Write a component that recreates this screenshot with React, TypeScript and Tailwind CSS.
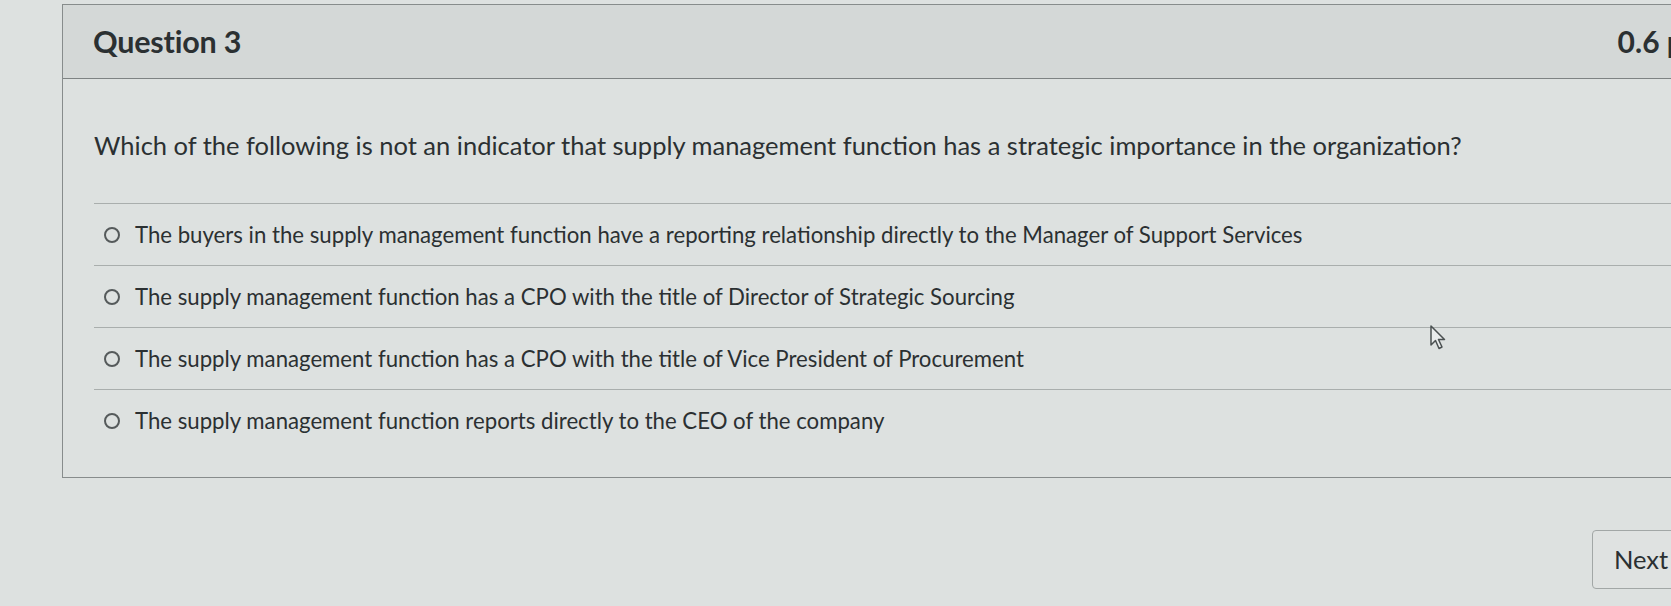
const options = [
  "The buyers in the supply management function have a reporting relationship directly to the Manager of Support Services",
  "The supply management function has a CPO with the title of Director of Strategic Sourcing",
  "The supply management function has a CPO with the title of Vice President of Procurement",
  "The supply management function reports directly to the CEO of the company",
];

export default function App() {
  return (
    <div className="relative h-[606px] w-full overflow-hidden bg-[#dde1e0] font-['Lato','Liberation_Sans',sans-serif] text-[#2b3032]">
      <div className="w-[1760px] pl-[62px] pt-[4px]">
        {/* question card */}
        <div className="border-[1.5px] border-[#878c8c]">
          <div className="flex h-[74px] items-center justify-between border-b-[1.5px] border-[#7e8383] bg-[#d4d8d7] pl-[30px] pr-[51px]">
            <h2 className="text-[30.5px] font-bold tracking-[-0.2px]">Question 3</h2>
            <span className="text-[30px] font-bold">0.6 pts</span>
          </div>

          <div className="pl-[31px] pt-[51px] pb-[25px]">
            <p className="text-[25.5px] leading-[30px]">
              Which of the following is not an indicator that supply management function has a strategic importance in the organization?
            </p>

            <div className="mt-[43px] border-t border-[#a9aead]">
              {options.map((o, i) => (
                <label
                  key={i}
                  className={
                    "flex h-[62px] items-center pl-[10px] text-[22.2px] " +
                    (i < options.length - 1 ? "border-b border-[#a9aead]" : "")
                  }
                >
                  <span className="h-[16px] w-[16px] shrink-0 rounded-full border-2 border-[#555a5b]"></span>
                  <span className="ml-[15px]">{o}</span>
                </label>
              ))}
            </div>
          </div>
        </div>

        <div className="flex justify-end pr-[48px] pt-[52px]">
          <button className="h-[59px] w-[120px] rounded-[4px] border-[1.5px] border-[#a2a7a6] bg-[#dfe2e1] pl-[21px] text-left text-[25.5px] text-[#2b3032]">
            Next
          </button>
        </div>
      </div>

      {/* mouse pointer caught in the photo */}
      <svg className="absolute left-[1430px] top-[325px]" width="16" height="26" viewBox="0 0 16 26">
        <path d="M1 1 L1 20 L5.5 15.5 L9 23.5 L12 22 L8.5 14.5 L14.5 14.5 Z" fill="#e9ecec" stroke="#4b5152" strokeWidth="1.5" strokeLinejoin="round" />
      </svg>
    </div>
  );
}
